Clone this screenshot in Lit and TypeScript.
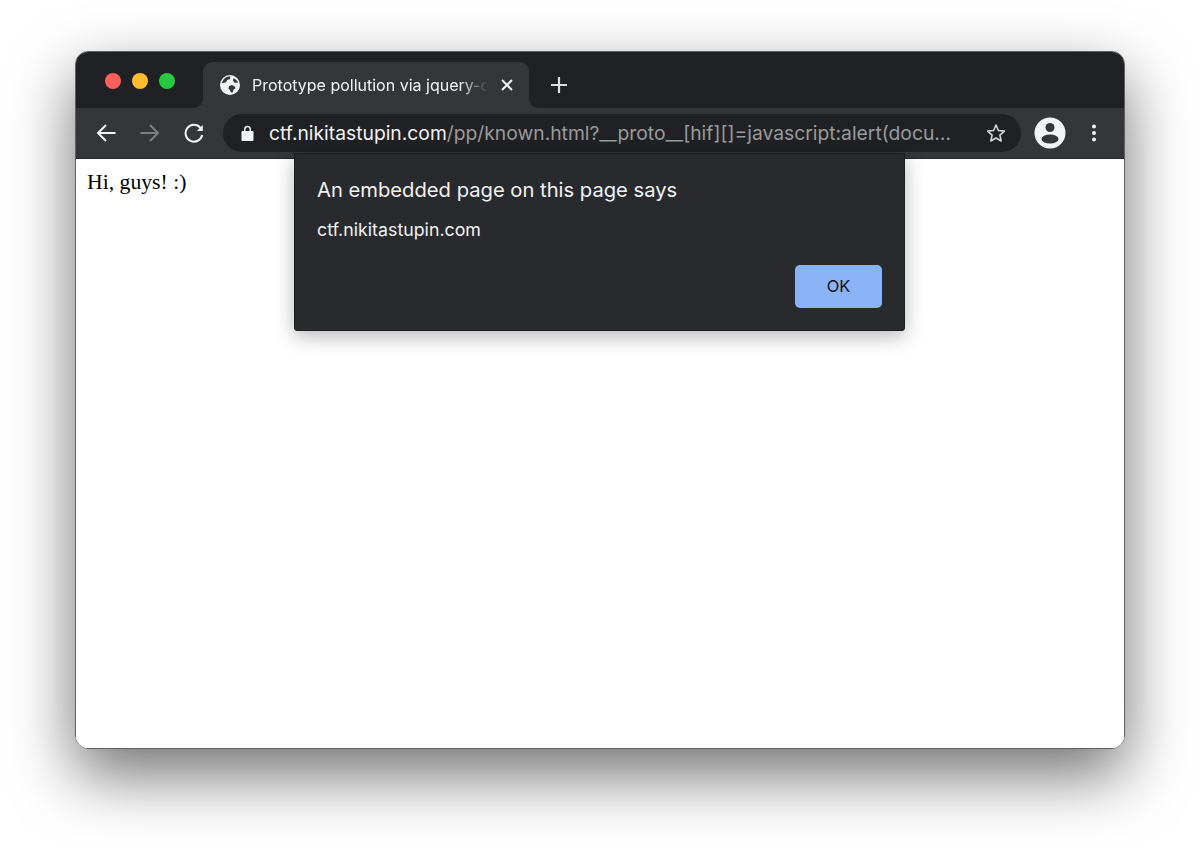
import { LitElement, html, css } from "lit";
import { customElement } from "lit/decorators.js";

@customElement("app-root")
export class AppRoot extends LitElement {
  static styles = css`
    :host {
      display: block;
      height: 849px;
      background: #fff;
      font-family: Inter, "Noto Sans", "Liberation Sans", sans-serif;
      -webkit-font-smoothing: antialiased;
      overflow: hidden;
    }
    .stage {
      padding: 51px 75px 0;
      height: 849px;
      box-sizing: border-box;
    }
    .window {
      position: relative;
      height: 698px;
      box-sizing: border-box;
      border: 1px solid #5f6062;
      border-radius: 13px;
      overflow: hidden;
      display: flex;
      flex-direction: column;
      background: #fff;
    }
    .shadow {
      border-radius: 13px;
      box-shadow: 0 26px 64px 0 rgba(0, 0, 0, 0.56);
    }
    .strip {
      height: 56px;
      flex: none;
      background: #202124;
      display: flex;
      align-items: flex-end;
      padding-left: 127px;
      box-sizing: border-box;
      position: relative;
    }
    .lights {
      position: absolute;
      left: 29px;
      top: 21px;
      display: flex;
      gap: 11px;
    }
    .light {
      width: 16px;
      height: 16px;
      border-radius: 50%;
    }
    .red { background: #ff5f57; }
    .amber { background: #febc2e; }
    .green { background: #28c840; }
    .tab {
      position: relative;
      width: 326px;
      height: 46px;
      background: #35363a;
      border-radius: 9px 9px 0 0;
      display: flex;
      align-items: center;
      padding: 0 15px 0 17px;
      box-sizing: border-box;
      color: #f1f3f4;
      font-size: 16px;
      gap: 12px;
    }
    .tab::before,
    .tab::after {
      content: "";
      position: absolute;
      bottom: 0;
      width: 9px;
      height: 9px;
    }
    .tab::before {
      left: -9px;
      background: radial-gradient(circle at 0 0, transparent 8.5px, #35363a 9px);
    }
    .tab::after {
      right: -9px;
      background: radial-gradient(circle at 100% 0, transparent 8.5px, #35363a 9px);
    }
    .title {
      flex: none;
      width: 236px;
      white-space: nowrap;
      -webkit-mask-image: linear-gradient(90deg, #000 88%, transparent 100%);
      mask-image: linear-gradient(90deg, #000 88%, transparent 100%);
    }
    .icon { display: block; flex: none; }
    .new-tab {
      margin: 0 0 14px 21px;
    }
    .toolbar {
      height: 50px;
      flex: none;
      background: #35363a;
      border-bottom: 1px solid #26272a;
      box-sizing: content-box;
      display: flex;
      align-items: center;
      padding-left: 20px;
    }
    .nav {
      display: flex;
      align-items: center;
      gap: 24px;
      margin-right: 19px;
    }
    .omnibox {
      width: 798px;
      height: 38px;
      flex: none;
      border-radius: 19px;
      background: #202124;
      display: flex;
      align-items: center;
      padding: 0 15px 0 18px;
      box-sizing: border-box;
      font-size: 19.3px;
      color: #9a9b9d;
      white-space: nowrap;
    }
    .url {
      margin-left: 15px;
      flex: 1;
      min-width: 0;
    }
    .host { color: #f1f3f4; }
    .right {
      display: flex;
      align-items: center;
      margin-left: 13px;
      gap: 25px;
    }
    .content {
      flex: 1;
      background: #fff;
      padding: 10px 11px;
      font-family: "Liberation Serif", serif;
      font-size: 21.7px;
      color: #000;
      line-height: 26px;
    }
    .dialog {
      position: absolute;
      left: 218px;
      top: 101px;
      width: 611px;
      height: 178px;
      box-sizing: border-box;
      background: #292a2d;
      border: 1px solid #1d1e20;
      border-radius: 0 0 3px 3px;
      box-shadow: 0 6px 20px rgba(0, 0, 0, 0.28);
      color: #e8eaed;
      padding: 23px 22px 22px;
      display: flex;
      flex-direction: column;
    }
    .d-title {
      font-size: 20.2px;
      line-height: 26px;
      color: #f1f3f4;
    }
    .d-text {
      margin-top: 17px;
      font-size: 17.8px;
      line-height: 20px;
      color: #f1f3f4;
    }
    .actions {
      margin-top: auto;
      display: flex;
      justify-content: flex-end;
    }
    .ok {
      width: 87px;
      height: 43px;
      border: none;
      padding: 0 0 2px;
      border-radius: 5px;
      background: #8ab4f8;
      color: #101114;
      font: inherit;
      font-size: 16.5px;
    }
  `;

  render() {
    return html`
      <div class="stage">
        <div class="shadow">
          <div class="window">
            <div class="strip">
              <div class="lights">
                <div class="light red"></div>
                <div class="light amber"></div>
                <div class="light green"></div>
              </div>
              <div class="tab">
                <svg class="icon" width="20" height="20" viewBox="0 0 20 20">
                  <circle cx="10" cy="10" r="10" fill="#f1f3f4" />
                  <path
                    fill="#35363a"
                    d="M2 8.2 6 7.2 7.3 4.8 10 4.2 10.4 1.6C7 .9 3 3.5 2 8.2ZM9.2 11 12 10 15 11.8 15.4 13.6 13.8 14.3 12.6 17.6C11 17.7 10.4 16.5 10 15.2L8.4 13.6ZM13.5 3.2 13 5.6 14.6 7.8 18.1 7.6C17.4 5.5 15.6 3.8 13.5 3.2Z"
                  />
                </svg>
                <div class="title">Prototype pollution via jquery-d</div>
                <svg class="icon" width="14" height="14" viewBox="0 0 14 14">
                  <path d="M2 2 12 12M12 2 2 12" stroke="#f1f3f4" stroke-width="2" fill="none" />
                </svg>
              </div>
              <svg class="icon new-tab" width="18" height="18" viewBox="0 0 18 18">
                <path d="M9 1V17M1 9H17" stroke="#e0e1e3" stroke-width="2.2" fill="none" />
              </svg>
            </div>
            <div class="toolbar">
              <div class="nav">
                <svg class="icon" width="20" height="20" viewBox="0 0 20 20">
                  <path d="M19.5 10H2.5M10 2 2 10 10 18" stroke="#f1f3f4" stroke-width="2" fill="none" />
                </svg>
                <svg class="icon" width="20" height="20" viewBox="0 0 20 20">
                  <path d="M.5 10H17.5M10 2 18 10 10 18" stroke="#7d7f83" stroke-width="2" fill="none" />
                </svg>
                <svg class="icon" width="20" height="20" viewBox="0 0 20 20">
                  <path d="M16.4 4.8A8.4 8.4 0 1 0 18.2 12" stroke="#f1f3f4" stroke-width="2" fill="none" />
                  <path d="M18.8 2V8H12.8Z" fill="#f1f3f4" />
                </svg>
              </div>
              <div class="omnibox">
                <svg class="icon" width="13" height="16" viewBox="0 0 13 16">
                  <path
                    fill="#f1f3f4"
                    d="M1.5 6H3V4.2a3.5 3.5 0 0 1 7 0V6h1.5a1 1 0 0 1 1 1v8a1 1 0 0 1-1 1h-10a1 1 0 0 1-1-1V7a1 1 0 0 1 1-1ZM4.5 6h4V4.2a2 2 0 0 0-4 0Z"
                  />
                </svg>
                <div class="url"><span class="host">ctf.nikitastupin.com</span>/pp/known.html?__proto__[hif][]=javascript:alert(docu…</div>
                <svg class="icon" width="20" height="20" viewBox="0 0 20 20">
                  <path
                    d="M10 2 12.4 7.5 18.4 8.1 13.9 12.1 15.2 18 10 15 4.8 18 6.1 12.1 1.6 8.1 7.6 7.5Z"
                    stroke="#d4d6d9"
                    stroke-width="1.6"
                    stroke-linejoin="round"
                    fill="none"
                  />
                </svg>
              </div>
              <div class="right">
                <svg class="icon" width="32" height="32" viewBox="0 0 32 32">
                  <circle cx="16" cy="16" r="15.5" fill="#f1f3f4" />
                  <circle cx="16" cy="10.5" r="4.5" fill="#35363a" />
                  <ellipse cx="16" cy="22" rx="8.5" ry="4.5" fill="#35363a" />
                </svg>
                <svg class="icon" width="6" height="18" viewBox="0 0 6 18">
                  <circle cx="3" cy="2.5" r="2" fill="#f1f3f4" />
                  <circle cx="3" cy="9" r="2" fill="#f1f3f4" />
                  <circle cx="3" cy="15.5" r="2" fill="#f1f3f4" />
                </svg>
              </div>
            </div>
            <div class="content">Hi, guys! :)</div>
            <div class="dialog">
              <div class="d-title">An embedded page on this page says</div>
              <div class="d-text">ctf.nikitastupin.com</div>
              <div class="actions"><button class="ok">OK</button></div>
            </div>
          </div>
        </div>
      </div>
    `;
  }
}
